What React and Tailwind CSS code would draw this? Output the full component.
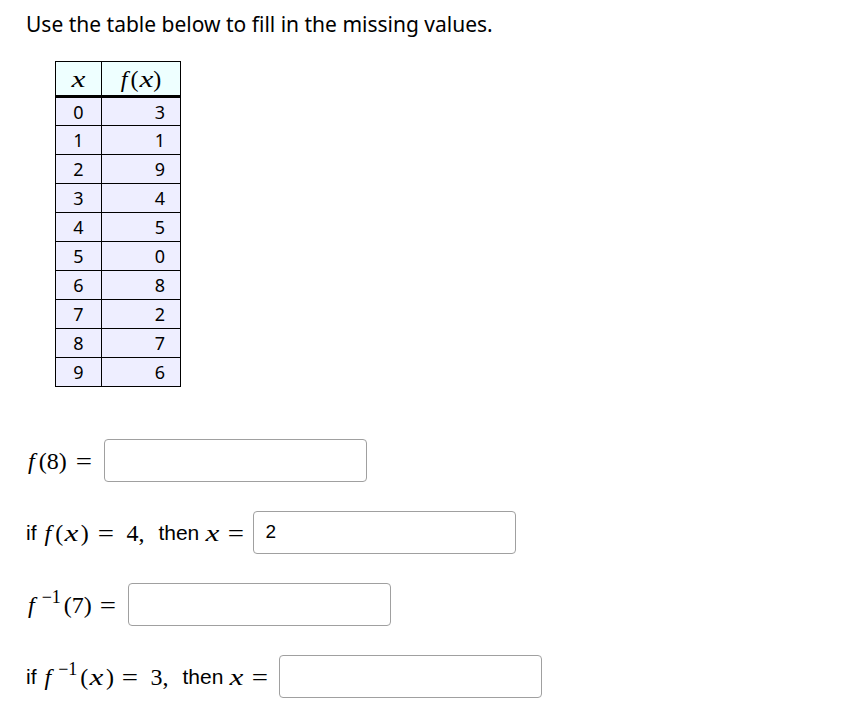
import React from "react";

function M({ children, className = "" }) {
  return (
    <span className={"inline-flex items-baseline font-['Liberation_Serif',serif] text-[24px] " + className}>
      {children}
    </span>
  );
}
function I({ children, className = "" }) {
  return <span className={"italic " + className}>{children}</span>;
}
function X({ className = "" }) {
  return <span className={"inline-block scale-x-[1.3] italic " + className}>x</span>;
}
function Eq({ className = "ml-[9px] mr-[14px]" }) {
  return <span className={"inline-block scale-x-[1.2] " + className}>=</span>;
}
function Inv() {
  return (
    <span className="relative -top-[10px] ml-[7px] font-['Liberation_Serif',serif] text-[18px]">
      −1
    </span>
  );
}
function Sans({ children, className = "" }) {
  return (
    <span className={"font-['Liberation_Sans',sans-serif] text-[21px] " + className}>{children}</span>
  );
}

function Box({ value = "" }) {
  return (
    <div className="flex h-[43px] w-[263px] items-center rounded-[4px] border border-[#a0a0a0] bg-white pl-[11px] font-['Liberation_Sans',sans-serif] text-[19px] text-black">
      {value}
    </div>
  );
}

export default function App() {
  const rows = [
    [0, 3],
    [1, 1],
    [2, 9],
    [3, 4],
    [4, 5],
    [5, 0],
    [6, 8],
    [7, 2],
    [8, 7],
    [9, 6],
  ];
  return (
    <div className="min-h-[715px] w-[856px] bg-white pl-[26px] pt-[10px] text-black">
      <div className="font-['Noto_Sans',sans-serif] text-[21px] leading-[28px]">
        Use the table below to fill in the missing values.
      </div>
      <table className="ml-[29px] mt-[23px] border-collapse font-['Noto_Sans',sans-serif] text-[18px] leading-none">
        <thead>
          <tr>
            <th className="h-[35px] w-[46px] border border-b-[3px] border-black bg-[#eeffff] p-0 text-center font-normal leading-none">
              <span className="font-['Liberation_Serif',serif] text-[24px] leading-none">
                <X />
              </span>
            </th>
            <th className="h-[35px] w-[79px] border border-b-[3px] border-black bg-[#eeffff] p-0 text-center font-normal leading-none">
              <span className="font-['Liberation_Serif',serif] text-[24px] leading-none">
                <I>f</I>
                <span className="ml-[3px]">(</span>
                <X className="mx-[2px]" />)
              </span>
            </th>
          </tr>
        </thead>
        <tbody>
          {rows.map(([x, y]) => (
            <tr key={x}>
              <td className="h-[29px] border border-black bg-[#eeeeff] p-0 text-center leading-none">{x}</td>
              <td className="h-[29px] border border-black bg-[#eeeeff] p-0 pr-[15px] text-right leading-none">{y}</td>
            </tr>
          ))}
        </tbody>
      </table>

      <div className="mt-[52px] flex flex-col gap-[29px]">
        <div className="flex h-[43px] items-center">
          <M className="ml-[2px]">
            <I>f</I>
            <span className="ml-[4px]">(8)</span>
            <Eq className="ml-[10px] mr-[14px]" />
          </M>
          <Box />
        </div>
        <div className="flex h-[43px] items-center">
          <Sans>if</Sans>
          <M className="ml-[8px]">
            <I>f</I>
            <span className="ml-[4px]">(</span>
            <X className="ml-[3px] mr-[4px]" />)
            <Eq className="ml-[10px] mr-[14px]" />
            4,
          </M>
          <Sans className="ml-[14px]">then</Sans>
          <M className="ml-[5px]">
            <X className="ml-[3px] mr-[2px]" />
            <Eq className="ml-[9px] mr-[11px]" />
          </M>
          <Box value="2" />
        </div>
        <div className="flex h-[43px] items-center">
          <M className="ml-[2px]">
            <I>f</I>
            <Inv />
            <span className="ml-[3px]">(7)</span>
            <Eq />
          </M>
          <Box />
        </div>
        <div className="flex h-[43px] items-center">
          <Sans>if</Sans>
          <M className="ml-[8px]">
            <I>f</I>
            <Inv />
            <span className="ml-[3px]">(</span>
            <X className="ml-[3px] mr-[4px]" />)
            <Eq />
            3,
          </M>
          <Sans className="ml-[14px]">then</Sans>
          <M className="ml-[5px]">
            <X className="ml-[3px] mr-[2px]" />
            <Eq className="ml-[9px] mr-[12px]" />
          </M>
          <Box />
        </div>
      </div>
    </div>
  );
}
